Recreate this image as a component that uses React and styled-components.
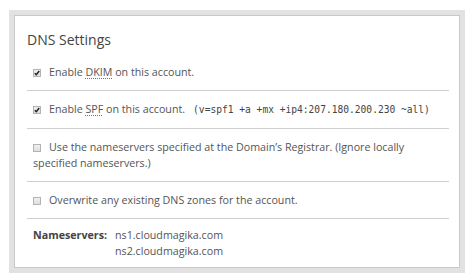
import React from "react";
import styled, { createGlobalStyle } from "styled-components";

const Global = createGlobalStyle`
  body {
    margin: 0;
    background: #fff;
    font-family: "Open Sans", "Liberation Sans", sans-serif;
  }
`;

const Frame = styled.div`
  margin: 10px 0 0 9px;
  width: 446px;
  padding: 5px;
  background: #e2e2e2;
`;

const Panel = styled.div`
  background: #fff;
  border: 1px solid #c9c9c9;
  padding: 14px 10px 8px 12px;
`;

const Title = styled.h2`
  margin: 0 0 4px;
  font-size: 14px;
  line-height: 20px;
  font-weight: 400;
  color: #444;
`;

const Row = styled.div`
  padding: ${(p) => (p.$last ? "8px 0 0 6px" : "10px 0 10px 6px")};
  border-bottom: ${(p) => (p.$last ? "none" : "1px solid #cfcfcf")};
  font-size: 10.7px;
  line-height: 16px;
  color: #555;
`;

const Box = styled.span`
  display: inline-block;
  width: 8px;
  height: 8px;
  margin-right: 8px;
  vertical-align: -1px;
  box-sizing: border-box;
  border: 1px solid #b4b4b4;
  background: linear-gradient(#f0f0f0, #dedede);
  position: relative;
  svg {
    position: absolute;
    left: 0;
    top: 0;
  }
`;

const Abbr = styled.abbr`
  text-decoration: underline dotted #777;
  text-underline-offset: 2px;
`;

const Code = styled.code`
  font-family: "DejaVu Sans Mono", "Liberation Mono", monospace;
  font-size: 9.6px;
  margin-left: 8px;
  color: #444;
`;

const NsGrid = styled.div`
  display: grid;
  grid-template-columns: 82px auto;
`;

const Label = styled.span`
  font-weight: 700;
  color: #444;
`;

function Check({ checked }) {
  return (
    <Box>
      {checked && (
        <svg width="6" height="6" viewBox="0 0 6 6">
          <path d="M0.8 3.2 L2.3 4.7 L5.2 1" fill="none" stroke="#222" strokeWidth="1.5" />
        </svg>
      )}
    </Box>
  );
}

export default function App() {
  return (
    <>
      <Global />
      <Frame>
        <Panel>
          <Title>DNS Settings</Title>
          <Row>
            <Check checked />
            Enable <Abbr>DKIM</Abbr> on this account.
          </Row>
          <Row>
            <Check checked />
            Enable <Abbr>SPF</Abbr> on this account.
            <Code>(v=spf1 +a +mx +ip4:207.180.200.230 ~all)</Code>
          </Row>
          <Row>
            <Check />
            Use the nameservers specified at the Domain’s Registrar. (Ignore locally specified nameservers.)
          </Row>
          <Row>
            <Check />
            Overwrite any existing DNS zones for the account.
          </Row>
          <Row $last>
            <NsGrid>
              <Label>Nameservers:</Label>
              <span>ns1.cloudmagika.com</span>
              <span />
              <span>ns2.cloudmagika.com</span>
            </NsGrid>
          </Row>
        </Panel>
      </Frame>
    </>
  );
}
